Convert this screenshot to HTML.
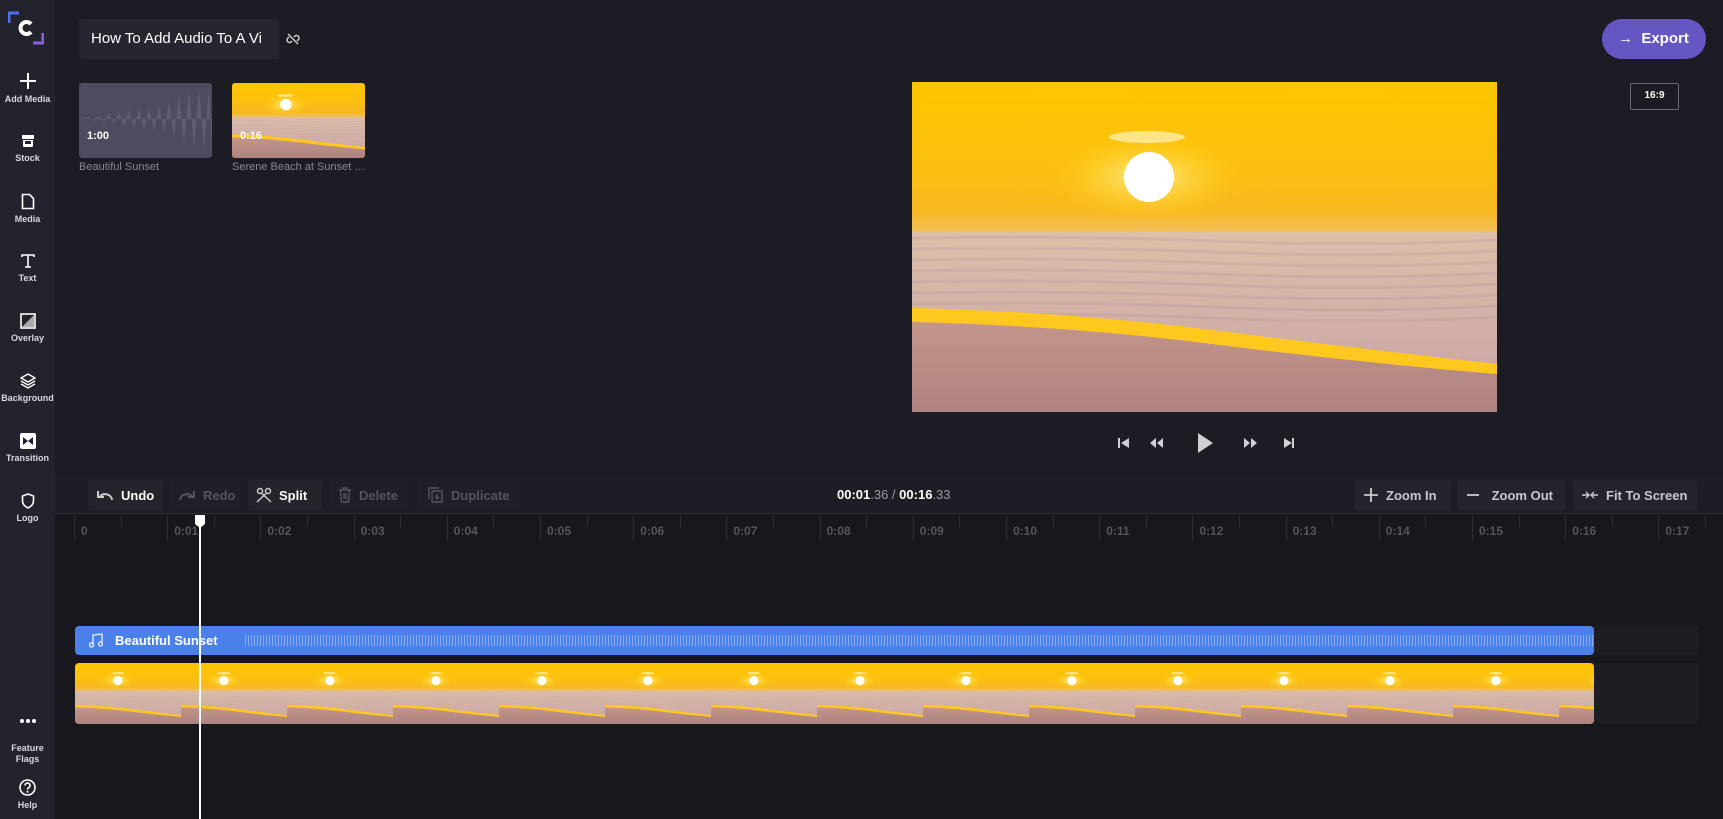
<!DOCTYPE html>
<html><head><meta charset="utf-8"><style>
*{box-sizing:border-box;margin:0;padding:0}
body{width:1723px;height:819px;overflow:hidden;background:#1c1c24;font-family:"Liberation Sans",sans-serif;color:#fff;position:relative}
.abs{position:absolute}
.side{left:0;top:0;width:55px;height:819px;background:#23232d}
.si{position:absolute;left:0;width:55px;text-align:center;font-size:9px;font-weight:bold;color:#d8d8de}
.si svg{display:block;margin:0 auto 4px}
.sun svg{display:block;width:100%;height:100%}
.btn{position:absolute;top:480px;height:30px;background:#24242d;border-radius:3px;font-size:13px;font-weight:bold;display:flex;align-items:center;gap:7px;padding-left:8px}
.dim{color:#55555f;background:#1f1f27}
.lab{position:absolute;top:524px;font-size:12px;font-weight:bold;color:#55555e}
.tk{position:absolute;width:1px;background:#2e2e38}
</style></head><body>
<div class="abs side"></div>
<svg class="abs" style="left:8px;top:10px" width="36" height="36" viewBox="0 0 36 36">
<path d="M1 13V3h10" fill="none" stroke="#4f6ef0" stroke-width="3"/>
<path d="M35 23v10H25" fill="none" stroke="#8a5ce0" stroke-width="3"/>
<path d="M23 14a6 6 0 1 0 0 8" fill="none" stroke="#fff" stroke-width="4"/>
</svg>
<div class="si" style="top:72px"><svg width="18" height="18" viewBox="0 0 18 18"><path d="M9 1v16M1 9h16" stroke="#fff" stroke-width="2"/></svg>Add Media</div>
<div class="si" style="top:133px"><svg width="16" height="16" viewBox="0 0 16 16"><path d="M2 2h12v4H2zM3 7h10v6a1 1 0 0 1-1 1H4a1 1 0 0 1-1-1z" fill="#fff"/><path d="M5 8v3h6V8" fill="#23232d"/></svg>Stock</div>
<div class="si" style="top:193px"><svg width="14" height="17" viewBox="0 0 14 17"><path d="M1.5 1.5h7l4 4v10h-11z" fill="none" stroke="#fff" stroke-width="1.6"/></svg>Media</div>
<div class="si" style="top:253px"><svg width="16" height="16" viewBox="0 0 16 16"><path d="M2 4V2h12v2M8 2v12M5 14h6" fill="none" stroke="#fff" stroke-width="1.6"/></svg>Text</div>
<div class="si" style="top:313px"><svg width="16" height="16" viewBox="0 0 16 16"><rect x="1" y="1" width="14" height="14" fill="none" stroke="#fff" stroke-width="1.6"/><path d="M2 14L14 2v12z" fill="#aaa"/></svg>Overlay</div>
<div class="si" style="top:373px"><svg width="16" height="16" viewBox="0 0 16 16"><path d="M8 1l7 4-7 4-7-4zM1 8l7 4 7-4M1 11l7 4 7-4" fill="none" stroke="#fff" stroke-width="1.4"/></svg>Background</div>
<div class="si" style="top:433px"><svg width="16" height="16" viewBox="0 0 16 16"><rect x="0" y="0" width="16" height="16" rx="2" fill="#fff"/><path d="M3 4l5 4-5 4zM13 4l-5 4 5 4z" fill="#23232d"/></svg>Transition</div>
<div class="si" style="top:493px"><svg width="14" height="16" viewBox="0 0 14 16"><path d="M7 1l5.5 2v5c0 3-2.5 5.5-5.5 7C4 13.5 1.5 11 1.5 8V3z" fill="none" stroke="#fff" stroke-width="1.6"/></svg>Logo</div>
<div class="si" style="top:718px"><svg width="16" height="6" viewBox="0 0 16 6"><circle cx="2" cy="3" r="2" fill="#fff"/><circle cx="8" cy="3" r="2" fill="#fff"/><circle cx="14" cy="3" r="2" fill="#fff"/></svg></div>
<div class="si" style="top:743px;line-height:11px">Feature<br>Flags</div>
<div class="si" style="top:779px"><svg width="17" height="17" viewBox="0 0 17 17"><circle cx="8.5" cy="8.5" r="7.5" fill="none" stroke="#fff" stroke-width="1.6"/><path d="M6 6.5a2.5 2.5 0 1 1 3.5 2.3c-.8.4-1 .8-1 1.7" fill="none" stroke="#fff" stroke-width="1.6"/><circle cx="8.5" cy="12.8" r="1" fill="#fff"/></svg>Help</div>

<div class="abs" style="left:79px;top:19px;width:200px;height:40px;background:#262630;border-radius:3px;font-size:15px;line-height:40px;padding-left:12px;overflow:hidden;white-space:nowrap">How To Add Audio To A Vi</div>
<svg class="abs" style="left:286px;top:32px" width="14" height="14" viewBox="0 0 14 14"><path d="M3 5l-1.5 1.5a2.5 2.5 0 0 0 3.5 3.5L6 9M11 9l1.5-1.5A2.5 2.5 0 0 0 9 4L8 5M2 2l10 10" fill="none" stroke="#ccc" stroke-width="1.5"/></svg>

<div class="abs" style="left:79px;top:83px;width:133px;height:75px;background:#4c4c5e;border-radius:3px;overflow:hidden">
<svg width="133" height="75" viewBox="0 0 133 75"><path d="M0 36 L10 34 L15 38 L20 33 L25 39 L30 31 L35 41 L40 29 L45 43 L50 27 L55 45 L60 25 L65 47 L70 24 L75 48 L80 22 L85 50 L90 18 L95 54 L100 12 L105 60 L110 8 L115 64 L120 6 L125 66 L130 4 L133 68 L133 36 Z" fill="#5e5e70"/></svg>
<div class="abs" style="left:8px;top:47px;font-size:11px;font-weight:bold">1:00</div></div>
<div class="abs sun" style="left:232px;top:83px;width:133px;height:75px;border-radius:3px;overflow:hidden">
<div class="abs" style="left:8px;top:47px;font-size:11px;font-weight:bold">0:16</div></div>
<div class="abs" style="left:79px;top:161px;font-size:11px;color:#8a8a95">Beautiful Sunset</div>
<div class="abs" style="left:232px;top:161px;font-size:11px;color:#8a8a95">Serene Beach at Sunset …</div>

<div class="abs sun" style="left:912px;top:82px;width:585px;height:330px"></div>
<svg class="abs" style="left:1110px;top:430px" width="190" height="26" viewBox="0 0 190 26">
<g fill="#cfcfd6"><rect x="8" y="8" width="2" height="10"/><path d="M19 8v10l-8-5z"/>
<path d="M46 8v10l-6-5zM53 8v10l-6-5z"/>
<path d="M88 3v20l15-10z"/>
<path d="M134 8v10l6-5zM141 8v10l6-5z"/>
<path d="M174 8v10l8-5z"/><rect x="182" y="8" width="2" height="10"/></g></svg>

<div class="abs" style="left:1602px;top:19px;width:104px;height:40px;background:#6457c4;border-radius:20px;font-size:15px;font-weight:bold;line-height:40px;padding-left:16px">→&nbsp;&nbsp;Export</div>
<div class="abs" style="left:1630px;top:83px;width:49px;height:27px;border:1.5px solid #6a6a72;border-radius:2px;font-size:10px;font-weight:bold;text-align:center;line-height:24px">16:9</div>

<div class="abs" style="left:55px;top:475px;width:1668px;height:344px;background:#17171d"></div>
<div class="abs" style="left:55px;top:475px;width:1668px;height:39px;background:#1d1d25;border-bottom:1px solid #2c2c35"></div>
<div class="btn" style="left:88px;width:75px"><svg width="18" height="12" viewBox="0 0 18 12"><path d="M16 11a7 6 0 0 0-12-4M2 2v6h6" fill="none" stroke="#ccc" stroke-width="2"/></svg>Undo</div>
<div class="btn dim" style="left:170px;width:70px"><svg width="18" height="12" viewBox="0 0 18 12"><path d="M2 11a7 6 0 0 1 12-4M16 2v6h-6" fill="none" stroke="#55555f" stroke-width="2"/></svg>Redo</div>
<div class="btn" style="left:248px;width:74px"><svg width="16" height="16" viewBox="0 0 16 16"><circle cx="4" cy="4" r="2.5" fill="none" stroke="#ccc" stroke-width="1.4"/><circle cx="12" cy="4" r="2.5" fill="none" stroke="#ccc" stroke-width="1.4"/><path d="M5.5 6L15 15M10.5 6L1 15" stroke="#ccc" stroke-width="1.4"/></svg>Split</div>
<div class="btn dim" style="left:330px;width:79px"><svg width="14" height="16" viewBox="0 0 14 16"><path d="M1 3h12M5 3V1h4v2M2.5 3l1 12h7l1-12M6 6v6M8 6v6" fill="none" stroke="#55555f" stroke-width="1.4"/></svg>Delete</div>
<div class="btn dim" style="left:418px;width:102px"><svg width="18" height="18" viewBox="0 0 18 18"><path d="M3 13V2h10" fill="none" stroke="#55555f" stroke-width="1.4"/><rect x="6" y="5" width="10" height="11" rx="1" fill="none" stroke="#55555f" stroke-width="1.4"/><path d="M11 8v5M9 11l2 2 2-2" fill="none" stroke="#55555f" stroke-width="1.4"/></svg>Duplicate</div>
<div class="abs" style="left:837px;top:487px;font-size:13px;font-weight:bold">00:01<span style="color:#9a9aa4;font-weight:normal">.36 / </span>00:16<span style="color:#9a9aa4;font-weight:normal">.33</span></div>
<div class="btn" style="left:1355px;width:96px;color:#c8c8d0"><svg width="16" height="16" viewBox="0 0 16 16"><path d="M8 1v14M1 8h14" stroke="#ccc" stroke-width="1.8"/></svg>Zoom In</div>
<div class="btn" style="left:1457px;width:108px;color:#c8c8d0"><svg width="16" height="16" viewBox="0 0 16 16"><path d="M2 8h12" stroke="#ccc" stroke-width="1.8"/></svg>&nbsp;Zoom Out</div>
<div class="btn" style="left:1573px;width:124px;color:#c8c8d0"><svg width="18" height="10" viewBox="0 0 18 10"><path d="M1 5h6M5 2l3 3-3 3M17 5h-6M13 2l-3 3 3 3" fill="none" stroke="#ccc" stroke-width="1.4"/></svg>Fit To Screen</div>

<div id="ruler"></div>

<div class="abs" style="left:75px;top:626px;width:1624px;height:29px;background:#1d1d24;border-radius:3px"></div>
<div class="abs" style="left:75px;top:663px;width:1624px;height:61px;background:#1d1d24;border-radius:3px"></div>
<div class="abs" style="left:75px;top:626px;width:1519px;height:29px;background:#4a80ea;border-radius:4px;overflow:hidden">
<div class="abs" style="left:170px;top:9px;width:1349px;height:11px;background:repeating-linear-gradient(90deg,rgba(255,255,255,.35) 0 1px,transparent 1px 3px)"></div>
<svg class="abs" style="left:14px;top:7px" width="14" height="15" viewBox="0 0 14 15"><path d="M4 12V2l9-1v10" fill="none" stroke="#dfe8ff" stroke-width="1.4"/><circle cx="2.5" cy="12" r="2" fill="none" stroke="#dfe8ff" stroke-width="1.4"/><circle cx="11.5" cy="11" r="2" fill="none" stroke="#dfe8ff" stroke-width="1.4"/></svg>
<div class="abs" style="left:40px;top:7px;font-size:13px;font-weight:bold">Beautiful Sunset</div></div>
<div class="abs" id="vt" style="left:75px;top:663px;width:1519px;height:61px;border-radius:4px;overflow:hidden;display:flex"></div>

<div class="abs" style="left:199px;top:520px;width:2px;height:299px;background:#fff"></div>
<svg class="abs" style="left:194px;top:514px" width="12" height="15" viewBox="0 0 12 15"><path d="M1 1h10v9l-5 4-5-4z" fill="#fff"/></svg>
<script>
var h='';for(var i=0;i<=17;i++){var x=74+93.2*i;h+='<div class="tk" style="left:'+x+'px;top:515px;height:26px"></div><div class="tk" style="left:'+(x+46.6)+'px;top:515px;height:12px"></div><div class="lab" style="left:'+(x+7)+'px">'+(i==0?'0':'0:'+(i<10?'0':'')+i)+'</div>';}
document.getElementById('ruler').innerHTML=h;
var n=0;
function sunSvg(){n++;var id='g'+n;
var w='';for(var k=0;k<8;k++){var y=156+k*11;w+='<path d="M0 '+y+' Q150 '+(y-3)+' 300 '+(y+3)+' T585 '+(y+2)+'" stroke="rgba(160,130,160,.18)" stroke-width="3" fill="none"/>';}
return '<svg viewBox="0 0 585 330" preserveAspectRatio="none"><defs>'+
'<linearGradient id="s'+id+'" x1="0" y1="0" x2="0" y2="1"><stop offset="0" stop-color="#ffc600"/><stop offset=".55" stop-color="#fcbf10"/><stop offset=".85" stop-color="#f7b820"/><stop offset="1" stop-color="#f0c060"/></linearGradient>'+
'<linearGradient id="w'+id+'" x1="0" y1="0" x2="0" y2="1"><stop offset="0" stop-color="#dcc0a8"/><stop offset="1" stop-color="#cca6a6"/></linearGradient>'+
'<linearGradient id="b'+id+'" x1="0" y1="0" x2="0" y2="1"><stop offset="0" stop-color="#c4958a"/><stop offset="1" stop-color="#ad8280"/></linearGradient>'+
'<radialGradient id="r'+id+'"><stop offset="0" stop-color="#fff0a0" stop-opacity=".9"/><stop offset="1" stop-color="#ffd000" stop-opacity="0"/></radialGradient>'+
'</defs><rect width="585" height="152" fill="url(#s'+id+')"/>'+
'<ellipse cx="235" cy="95" rx="100" ry="45" fill="url(#r'+id+')"/>'+
'<ellipse cx="235" cy="55" rx="38" ry="6" fill="#fff0b0" opacity=".75"/>'+
'<circle cx="237" cy="95" r="25" fill="#fff"/>'+
'<rect y="150" width="585" height="150" fill="url(#w'+id+')"/>'+w+
'<path d="M0 226 Q160 230 300 248 T585 282 L585 330 L0 330Z" fill="#ffc81e"/>'+
'<path d="M0 240 Q160 244 300 262 T585 292 L585 330 L0 330Z" fill="url(#b'+id+')"/>'+
'</svg>';}
document.querySelectorAll('.sun').forEach(function(e){e.insertAdjacentHTML('afterbegin',sunSvg());});
var v='';for(var i=0;i<15;i++)v+='<div class="sun" style="flex:0 0 106px;height:61px">'+sunSvg()+'</div>';
document.getElementById('vt').innerHTML=v;
</script>
</body></html>
